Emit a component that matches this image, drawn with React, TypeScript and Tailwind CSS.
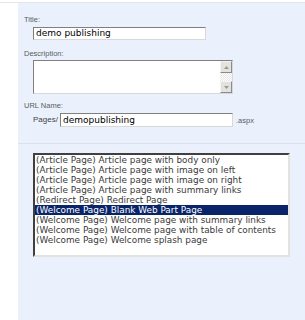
import React from "react";

const items = [
  "(Article Page) Article page with body only",
  "(Article Page) Article page with image on left",
  "(Article Page) Article page with image on right",
  "(Article Page) Article page with summary links",
  "(Redirect Page) Redirect Page",
  "(Welcome Page) Blank Web Part Page",
  "(Welcome Page) Welcome page with summary links",
  "(Welcome Page) Welcome page with table of contents",
  "(Welcome Page) Welcome splash page",
];

const label = "text-[7.5px] leading-[9px] text-[#5c5c5c] font-['Liberation_Sans',Arial,sans-serif]";

export default function App() {
  return (
    <div
      className="w-[305px] h-[320px] bg-white flex flex-col overflow-hidden"
      style={{ fontFamily: '"DejaVu Sans", Verdana, sans-serif' }}
    >
      <div className="h-[2px] shrink-0" />
      <div className="h-px bg-[#e2e6eb] shrink-0" />
      <div className="flex flex-1">
        <div className="w-[18px] shrink-0" />
        <div className="flex-1 bg-[#eaf1fc] flex flex-col">
          <div className="h-[140px] shrink-0 pl-[6px] pt-[12px]">
            <div className={label}>Title:</div>
            <div className="ml-[9px] mt-[3px] w-[173px] h-[13px] bg-white border border-[#7f7f7f] border-r-[#d8d8d8] border-b-[#d8d8d8] text-[9px] leading-[11px] pl-[2px] text-black">
              demo publishing
            </div>
            <div className={"mt-[9px] " + label}>Description:</div>
            <div className="ml-[9px] mt-[2px] w-[200px] h-[34px] bg-white border border-[#7f7f7f] border-r-[#d8d8d8] border-b-[#d8d8d8] flex justify-end">
              <div className="w-[12px] h-full flex flex-col bg-[repeating-conic-gradient(#e6e6e6_0_25%,#ffffff_0_50%)] bg-[length:2px_2px]">
                <div className="h-[12px] bg-[#e4e2dc] border border-[#f4f4f4] border-r-[#8a8a8a] border-b-[#8a8a8a] flex items-center justify-center">
                  <svg width="5" height="3" viewBox="0 0 5 3"><path d="M2.5 0 L5 3 L0 3Z" fill="#9a9a9a" /></svg>
                </div>
                <div className="flex-1" />
                <div className="h-[12px] bg-[#e4e2dc] border border-[#f4f4f4] border-r-[#8a8a8a] border-b-[#8a8a8a] flex items-center justify-center">
                  <svg width="5" height="3" viewBox="0 0 5 3"><path d="M0 0 L5 0 L2.5 3Z" fill="#9a9a9a" /></svg>
                </div>
              </div>
            </div>
            <div className={"mt-[7px] " + label}>URL Name:</div>
            <div className="ml-[9px] mt-[3px] flex items-center h-[14px]">
              <span className="text-[8px] text-[#444] w-[27px] font-['Liberation_Sans',Arial,sans-serif]">Pages/</span>
              <div className="w-[173px] h-[14px] bg-white border border-[#7f7f7f] border-r-[#d8d8d8] border-b-[#d8d8d8] text-[9px] leading-[12px] pl-[2px] text-black">
                demopublishing
              </div>
              <span className={"ml-[3px] " + label}>.aspx</span>
            </div>
          </div>
          <div className="h-px bg-[#dde2ea] shrink-0" />
          <div className="pl-[15px] pt-[9px]">
            <div className="w-[257px] h-[104px] bg-white border-2 border-t-[#404040] border-l-[#404040] border-r-[#e4e2dc] border-b-[#e4e2dc]">
              {items.map((t, i) => (
                <div
                  key={i}
                  className={
                    "h-[10px] text-[8.9px] leading-[10px] pl-px whitespace-nowrap " +
                    (i === 5 ? "bg-[#0a246a] text-white" : "text-[#3a3a3a]")
                  }
                >
                  {t}
                </div>
              ))}
            </div>
          </div>
        </div>
      </div>
    </div>
  );
}
